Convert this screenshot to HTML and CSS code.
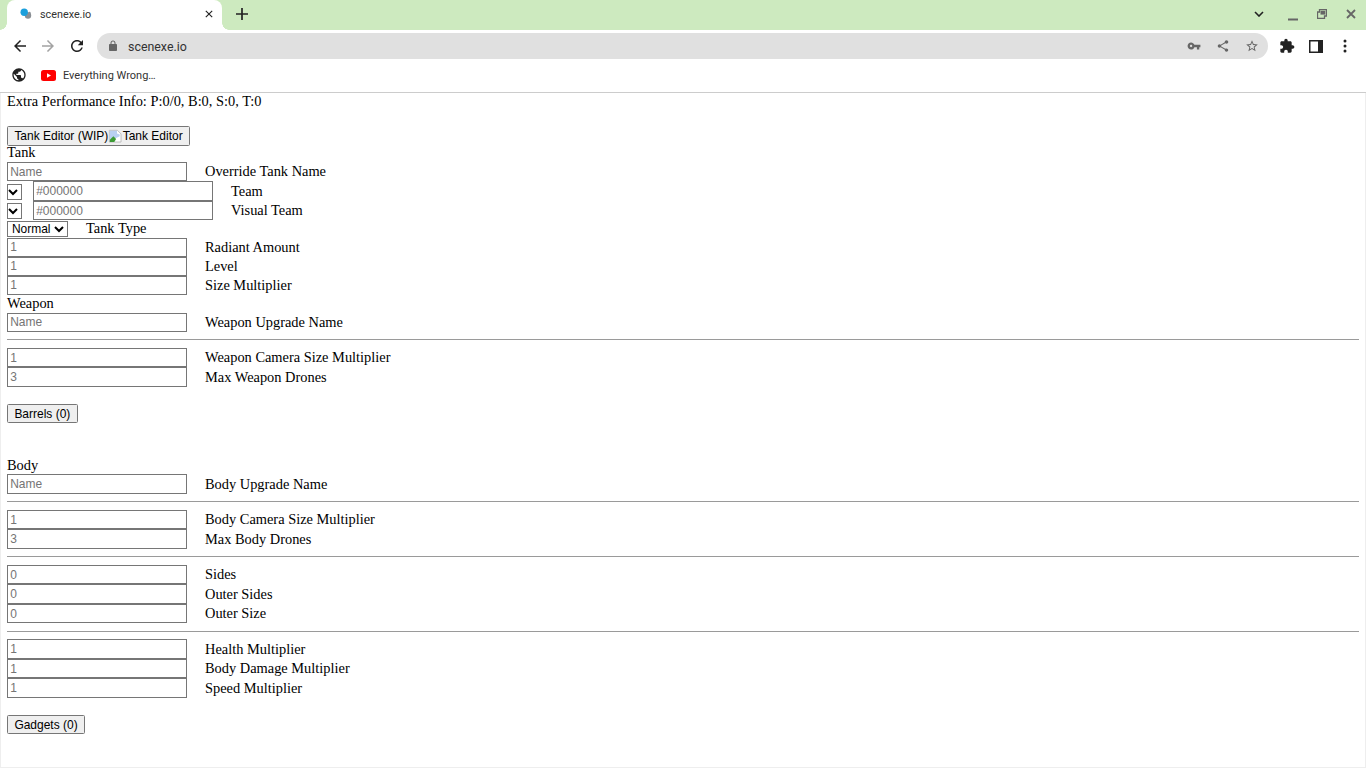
FILE: index.html
```html
<!DOCTYPE html>
<html lang="en">
<head>
<meta charset="utf-8">
<title>scenexe.io</title>
<link rel="stylesheet" href="styles.css">
</head>
<body>
<header class="browser">
  <div class="tabstrip">
    <div class="tab">
      <svg class="favicon" viewBox="0 0 12 12"><circle cx="8" cy="7.500" r="3.200" fill="#8a8f94"/><circle cx="9.500" cy="5" r="1.200" fill="#8a8f94"/><circle cx="4.200" cy="4.200" r="3.700" fill="#1b9fdc"/></svg>
      <span class="tab-title">scenexe.io</span>
      <svg class="tab-close" viewBox="0 0 10 10"><path d="M1 1l8 8M9 1l-8 8" stroke="#222" stroke-width="1.400" fill="none"/></svg>
    </div>
    <svg class="newtab" viewBox="0 0 12 12"><path d="M6 0v12M0 6h12" stroke="#222" stroke-width="1.700" fill="none"/></svg>
    <svg class="tablist" viewBox="0 0 10 6"><path d="M1 1l4 4 4-4" stroke="#222" stroke-width="1.600" fill="none"/></svg>
    <svg class="win win-min" viewBox="0 0 10 10"><path d="M0 8.500h10" stroke="#666" stroke-width="2" fill="none"/></svg>
    <svg class="win win-restore" viewBox="0 0 10 10"><path d="M2.500 .5h7v6.500H7.500v2.500H.5V3h2z" stroke="#666" stroke-width="1.300" fill="none"/><rect x="3.500" y="1.800" width="4.800" height="3.800" fill="#666"/></svg>
    <svg class="win win-close" viewBox="0 0 10 10"><path d="M1 1l8 8M9 1l-8 8" stroke="#666" stroke-width="1.800" fill="none"/></svg>
  </div>
  <div class="toolbar">
    <svg class="nav" viewBox="0 0 24 24"><path fill="#222" d="M20 11H7.830l5.590-5.590L12 4l-8 8 8 8 1.410-1.410L7.830 13H20v-2z"/></svg>
    <svg class="nav nav-fwd" viewBox="0 0 24 24"><path fill="#a3a3a3" d="M4 11h12.170l-5.590-5.590L12 4l8 8-8 8-1.410-1.410L16.170 13H4v-2z"/></svg>
    <svg class="nav nav-reload" viewBox="0 0 24 24"><path fill="#222" d="M17.650 6.350C16.200 4.900 14.210 4 12 4c-4.420 0-7.990 3.580-7.990 8s3.570 8 7.990 8c3.730 0 6.840-2.550 7.730-6h-2.080c-.82 2.330-3.040 4-5.650 4-3.310 0-6-2.690-6-6s2.690-6 6-6c1.660 0 3.140.69 4.220 1.780L13 11h7V4l-2.350 2.350z"/></svg>
    <div class="omnibox">
      <svg class="lock" viewBox="0 0 24 24"><path fill="#666" d="M18 8h-1V6c0-2.760-2.240-5-5-5S7 3.240 7 6v2H6c-1.100 0-2 .9-2 2v10c0 1.100.9 2 2 2h12c1.100 0 2-.9 2-2V10c0-1.100-.9-2-2-2zM9 6c0-1.660 1.340-3 3-3s3 1.340 3 3v2H9V6z"/></svg>
      <span class="url">scenexe.io</span>
      <svg class="omni-icon" viewBox="0 0 24 24"><path fill="#666" d="M12.650 10C11.830 7.670 9.610 6 7 6c-3.310 0-6 2.690-6 6s2.690 6 6 6c2.610 0 4.830-1.670 5.650-4H17v4h4v-4h2v-4H12.650zM7 14c-1.100 0-2-.9-2-2s.9-2 2-2 2 .9 2 2-.9 2-2 2z"/></svg>
      <svg class="omni-icon" viewBox="0 0 24 24"><path fill="#666" d="M18 16.080c-.76 0-1.440.3-1.960.77L8.910 12.700c.05-.23.09-.46.09-.7s-.04-.47-.09-.7l7.050-4.110c.54.5 1.250.81 2.040.81 1.660 0 3-1.340 3-3s-1.340-3-3-3-3 1.340-3 3c0 .24.04.47.09.7L8.040 9.810C7.500 9.310 6.790 9 6 9c-1.660 0-3 1.340-3 3s1.340 3 3 3c.79 0 1.500-.31 2.040-.81l7.120 4.160c-.05.21-.08.43-.08.65 0 1.610 1.310 2.920 2.920 2.920 1.610 0 2.920-1.310 2.920-2.920s-1.310-2.920-2.920-2.920z"/></svg>
      <svg class="omni-icon" viewBox="0 0 24 24"><path fill="#666" d="M22 9.240l-7.190-.62L12 2 9.190 8.630 2 9.240l5.460 4.730L5.820 21 12 17.270 18.180 21l-1.630-7.030L22 9.240zM12 15.400l-3.760 2.270 1-4.280-3.320-2.880 4.380-.38L12 6.100l1.710 4.040 4.380.38-3.320 2.880 1 4.280L12 15.400z"/></svg>
    </div>
    <svg class="tool-ext" viewBox="0 0 24 24"><path fill="#222" d="M20.500 11H19V7c0-1.100-.9-2-2-2h-4V3.500C13 2.120 11.880 1 10.500 1S8 2.120 8 3.500V5H4c-1.100 0-1.990.9-1.990 2v3.800H3.500c1.490 0 2.700 1.210 2.700 2.700s-1.210 2.700-2.700 2.700H2V20c0 1.100.9 2 2 2h3.800v-1.500c0-1.490 1.210-2.700 2.700-2.700 1.490 0 2.700 1.210 2.700 2.700V22H17c1.100 0 2-.9 2-2v-4h1.500c1.380 0 2.500-1.120 2.500-2.500S21.880 11 20.500 11z"/></svg>
    <svg class="tool-side" viewBox="0 0 14 13"><rect x=".75" y=".75" width="12.500" height="11.500" fill="#fff" stroke="#222" stroke-width="1.500"/><rect x="9" y="1" width="4" height="11" fill="#222"/></svg>
    <svg class="tool-menu" viewBox="0 0 4 14"><circle cx="2" cy="2" r="1.500" fill="#222"/><circle cx="2" cy="7" r="1.500" fill="#222"/><circle cx="2" cy="12" r="1.500" fill="#222"/></svg>
  </div>
  <div class="bookmarks">
    <svg class="globe" viewBox="0 0 24 24"><path fill="#222" d="M12 2C6.480 2 2 6.480 2 12s4.480 10 10 10 10-4.480 10-10S17.520 2 12 2zm-1 17.930c-3.950-.49-7-3.850-7-7.930 0-.62.08-1.210.21-1.790L9 15v1c0 1.100.9 2 2 2v1.930zm6.900-2.540c-.26-.81-1-1.390-1.900-1.390h-1v-3c0-.55-.45-1-1-1H8v-2h2c.55 0 1-.45 1-1V7h2c1.100 0 2-.9 2-2v-.41c2.930 1.190 5 4.060 5 7.410 0 2.080-.8 3.970-2.100 5.390z"/></svg>
    <svg class="yt" viewBox="0 0 15 11"><rect width="15" height="11" rx="2.500" fill="#f00"/><path d="M6 3.200v4.600l4-2.300z" fill="#fff"/></svg>
    <span class="bookmark-label">Everything Wrong…</span>
  </div>
</header>
<main class="page">
  <div class="info">Extra Performance Info: P:0/0, B:0, S:0, T:0</div>
  <button class="editor-btn" type="button">Tank Editor (WIP)<svg class="broken" viewBox="0 0 16 16"><path d="M1.500 1.500h9l4 4v9h-13z" fill="#fff" stroke="#b9b9b9"/><path d="M2 2h8v3l3 1v2l-4 2-7 1z" fill="#b9d0f2"/><path d="M2 14.500v-2.500l4-4 3 3-2 3.500z" fill="#3d9b35"/></svg>Tank Editor</button>
  <div class="heading">Tank</div>
  <div class="row"><input class="field" placeholder="Name"><span>Override Tank Name</span></div>
  <div class="row"><select class="swatch"></select><input class="field" placeholder="#000000"><span>Team</span></div>
  <div class="row"><select class="swatch"></select><input class="field" placeholder="#000000"><span>Visual Team</span></div>
  <div class="row row-type"><select class="type"><option>Normal</option></select><span>Tank Type</span></div>
  <div class="row row-tight"><input class="field" placeholder="1"><span>Radiant Amount</span></div>
  <div class="row row-tight"><input class="field" placeholder="1"><span>Level</span></div>
  <div class="row row-tight"><input class="field" placeholder="1"><span>Size Multiplier</span></div>
  <div class="heading heading-weapon">Weapon</div>
  <div class="row"><input class="field" placeholder="Name"><span>Weapon Upgrade Name</span></div>
  <hr class="rule rule-weapon">
  <div class="row"><input class="field" placeholder="1"><span>Weapon Camera Size Multiplier</span></div>
  <div class="row"><input class="field" placeholder="3"><span>Max Weapon Drones</span></div>
  <button class="list-btn" type="button">Barrels (0)</button>
  <div class="heading heading-body">Body</div>
  <div class="row"><input class="field" placeholder="Name"><span>Body Upgrade Name</span></div>
  <hr class="rule rule-up">
  <div class="row"><input class="field" placeholder="1"><span>Body Camera Size Multiplier</span></div>
  <div class="row"><input class="field" placeholder="3"><span>Max Body Drones</span></div>
  <hr class="rule rule-up">
  <div class="row"><input class="field" placeholder="0"><span>Sides</span></div>
  <div class="row"><input class="field" placeholder="0"><span>Outer Sides</span></div>
  <div class="row"><input class="field" placeholder="0"><span>Outer Size</span></div>
  <hr class="rule">
  <div class="row"><input class="field" placeholder="1"><span>Health Multiplier</span></div>
  <div class="row"><input class="field" placeholder="1"><span>Body Damage Multiplier</span></div>
  <div class="row"><input class="field" placeholder="1"><span>Speed Multiplier</span></div>
  <button class="list-btn" type="button">Gadgets (0)</button>
</main>
</body>
</html>
```
FILE: styles.css
```css
* { box-sizing: border-box; }
html, body { margin: 0; height: 768px; overflow: hidden; }
body { background: #fff; color: #000; font: 16px "Liberation Serif", serif; display: flex; flex-direction: column; }
svg { display: block; flex: none; }

.browser { flex: none; height: 93px; border-bottom: 1px solid #ccc; font-family: Roboto, sans-serif; color: #333; }

.tabstrip { height: 30px; background: #cdeabf; display: flex; align-items: center; }
.tab { position: relative; width: 215px; height: 30px; margin-left: 7px; background: #fff; border-radius: 8px 8px 0 0; display: flex; align-items: center; padding-left: 13px; }
.tab::before, .tab::after { content: ""; position: absolute; bottom: 0; width: 7px; height: 7px; }
.tab::before { right: 100%; background: radial-gradient(circle at 0 0, #cdeabf 6.500px, #fff 7px); }
.tab::after { left: 100%; background: radial-gradient(circle at 100% 0, #cdeabf 6.500px, #fff 7px); }
.favicon { width: 12px; height: 12px; margin-top: -3px; }
.tab-title { font-size: 10.800px; width: 165px; margin-left: 8px; margin-top: -2px; }
.tab-close { width: 8px; height: 8px; margin-top: -2px; }
.newtab { width: 12px; height: 12px; margin-left: 14px; margin-top: -2px; }
.tablist { width: 10px; height: 6px; margin-left: 1006px; margin-top: -3px; }
.win { width: 10px; height: 10px; margin-top: -2px; }
.win-min { margin-left: 24px; margin-top: 1px; }
.win-restore { margin-left: 19px; }
.win-close { margin-left: 19px; }

.toolbar { height: 32px; display: flex; align-items: center; padding-left: 11px; }
.nav { width: 18px; height: 18px; }
.nav-fwd { margin-left: 10px; }
.nav-reload { margin-left: 11px; }
.omnibox { width: 1171px; height: 26px; margin-left: 11px; background: #e0e0e0; border-radius: 13px; display: flex; align-items: center; padding: 0 9px 0 10px; gap: 15px; }
.lock { width: 12px; height: 12px; margin-right: -6px; }
.url { flex: 1; font-size: 12.400px; color: #333; }
.omni-icon { width: 14px; height: 14px; }
.tool-ext { width: 16px; height: 16px; margin-left: 11px; }
.tool-side { width: 14px; height: 13px; margin-left: 14px; }
.tool-menu { width: 4px; height: 14px; margin-left: 20px; }

.bookmarks { height: 30px; display: flex; align-items: center; padding-left: 11px; padding-bottom: 4px; }
.globe { width: 16px; height: 16px; }
.yt { width: 15px; height: 11px; margin-left: 14px; }
.bookmark-label { font-size: 11px; margin-left: 7px; color: #333; }

/* The page content is shown at 90% browser zoom, so its sizes are the unzoomed ones. */
.page { zoom: 0.9; flex: 1; padding: 0 6.670px; border: 1px solid #eee; border-top: 0; }
.info { height: 20px; line-height: 19px; margin-bottom: 16.670px; }

button, input, select { font: 13.333px "Liberation Sans", Arial, sans-serif; }
.editor-btn, .list-btn { display: flex; align-items: center; height: 21.670px; padding: 0 7.100px; }
.list-btn { margin-top: 18.890px; }
.broken { width: 16px; height: 16px; }

.heading { height: 18.060px; line-height: 14.440px; }
.heading-weapon { margin-top: 1.600px; line-height: 15.600px; }
.heading-body { height: 17.780px; margin-top: 38.940px; line-height: 15.600px; }

.row { display: flex; align-items: center; height: 21.670px; gap: 20px; }
.row-type { height: 19.440px; }
.row-tight { height: 21.220px; }
.field { width: 200px; height: 21.670px; flex: none; padding: 1px 2px 1px 2.400px; }
.swatch { width: 16.670px; height: 17.780px; flex: none; margin: 2px -7.780px 0 0; padding: 0; }
.type { width: 67.780px; height: 17.780px; flex: none; padding: 0 0 0 1px; }

.rule { height: 1.110px; margin: 8.060px 0 8.610px; border: 0; background: #9a9a9a; }
.rule-weapon { margin-bottom: 8.200px; }
.rule-up { margin: 7.750px 0 8.920px; }
```
